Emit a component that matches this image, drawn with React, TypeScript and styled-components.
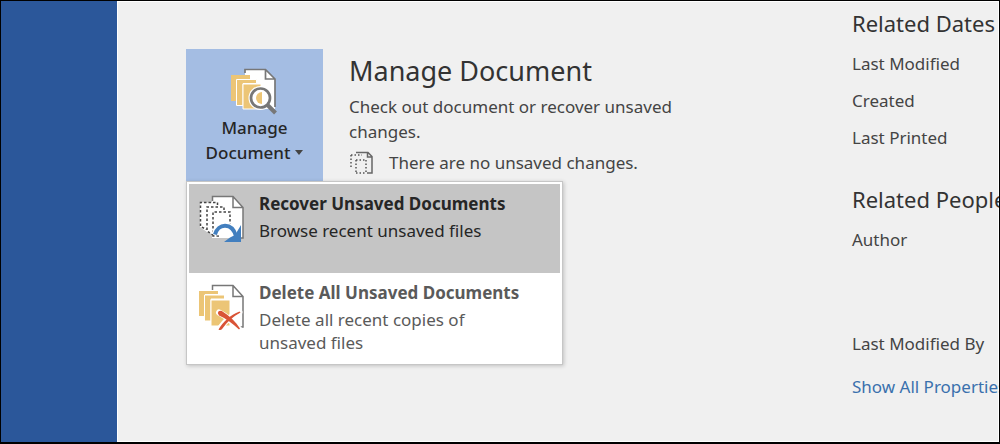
import React from 'react';
import styled, { createGlobalStyle } from 'styled-components';

const GlobalStyle = createGlobalStyle`
  * { box-sizing: border-box; }
  body {
    margin: 0;
    background: #f0f0f0;
    font-family: "Noto Sans", "Open Sans", sans-serif;
    font-size: 17px;
    color: #444;
  }
  h1, h2, p, ul, dl, dt { margin: 0; padding: 0; font-weight: 400; }
  button { font: inherit; color: inherit; border: 0; cursor: pointer; }
  svg { display: block; flex: none; }
`;

const Window = styled.div`
  display: flex;
  min-height: 100vh;
  border: 1px solid #000;
  border-bottom-width: 2px;
  overflow: hidden;
`;

const Sidebar = styled.nav`
  flex: 0 0 116px;
  background: #2b579a;
`;

const Page = styled.main`
  flex: 1;
  min-width: 0;
  display: flex;
  justify-content: space-between;
  border: 1px solid #fff;
`;

const Section = styled.section`
  display: flex;
  align-items: flex-start;
  gap: 26px;
  padding: 47px 0 0 68px;
`;

const MenuAnchor = styled.div`
  position: relative;
  flex: none;
`;

const Tile = styled.button`
  display: flex;
  flex-direction: column;
  align-items: center;
  width: 137px;
  height: 136px;
  padding: 18px 0 0;
  background: #a4bde3;
  color: #262626;
  font-weight: 500;
  line-height: 25px;
`;

const Caret = styled.span`
  display: inline-block;
  margin-left: 5px;
  vertical-align: 4px;
  border: 4px solid transparent;
  border-top: 5px solid #444;
  border-bottom: 0;
`;

const Menu = styled.ul`
  position: absolute;
  top: 132px;
  left: 0;
  width: 377px;
  padding: 2px;
  list-style: none;
  background: #fff;
  border: 1px solid #c6c6c6;
  box-shadow: 1px 1px 4px rgba(0, 0, 0, 0.2);
`;

const MenuItem = styled.button<{ $active?: boolean }>`
  display: flex;
  align-items: flex-start;
  gap: 12px;
  width: 100%;
  height: 89px;
  padding: 8px 0 0 10px;
  text-align: left;
  background: ${(p) => (p.$active ? '#c5c5c5' : '#fff')};
  color: ${(p) => (p.$active ? '#262626' : '#5a5a5a')};
`;

const ItemText = styled.span`
  display: flex;
  flex-direction: column;
  gap: 4px;
  line-height: 23px;
`;

const ItemTitle = styled.strong`
  font-weight: 700;
  white-space: nowrap;
`;

const ItemNote = styled.span`
  width: 240px;
`;

const Details = styled.div`
  width: 350px;
`;

const Title = styled.h1`
  margin: 4px 0 5px;
  font-size: 27px;
  line-height: 36px;
  color: #333;
`;

const Copy = styled.p`
  line-height: 25px;
`;

const Status = styled.p`
  display: flex;
  align-items: center;
  gap: 14px;
  margin-top: 6px;
  line-height: 25px;
`;

const Properties = styled.aside`
  flex: none;
  width: 146px;
  padding-top: 6px;
  white-space: nowrap;
`;

const Heading = styled.h2`
  margin-bottom: 7px;
  font-size: 22px;
  line-height: 30px;
  color: #333;
`;

const List = styled.dl`
  margin-bottom: 28px;
  line-height: 37px;
`;

const SpacedTerm = styled.dt`
  margin-top: 67px;
`;

const Link = styled.a`
  display: block;
  margin-top: -22px;
  line-height: 37px;
  color: #3a70ad;
  text-decoration: none;
`;

const SheetBehind = () => (
  <>
    <path d="M13 4.500h21l10 11V46H13z" fill="#fff" />
    <path d="M13.500 9V4.500h20.500L44 15.500V46h-3M34 4.500v11h10" fill="none" stroke="#777" strokeWidth="1.500" />
  </>
);

const ManageIcon = () => (
  <svg width="48" height="48" viewBox="0 0 48 48" aria-hidden="true">
    <path d="M14 2.500h20l10 10V42H14z" fill="#fff" />
    <path d="M14 6V2.500h20.500L44 12v28M34.500 2.500V12H44" fill="none" stroke="#777" strokeWidth="1.700" />
    <path d="M0 8h19v4H6v22H0z" fill="#ecc576" />
    <path d="M5.500 12.500h20v4H12v22H5.500z" fill="#ecc576" stroke="#fff" />
    <path d="M12 17h18v25H12z" fill="#ecc576" stroke="#fff" />
    <circle cx="29.500" cy="31" r="12" fill="#fff" />
    <path d="M31 25v12a6 6 0 0 1 0-12z" fill="#ecc576" />
    <circle cx="29.500" cy="31" r="9.500" fill="none" stroke="#777" strokeWidth="2.700" />
    <path d="M36.500 38l8 8" stroke="#777" strokeWidth="4" />
  </svg>
);

const RecoverIcon = () => (
  <svg width="48" height="52" viewBox="0 0 48 52" aria-hidden="true">
    <SheetBehind />
    <path d="M1 10.500h17V15h6.500v4.500H31V44H18l-10-4-7-5z" fill="#fff" />
    <g fill="none" stroke="#444" strokeWidth="1.500" strokeDasharray="2.500 2">
      <path d="M18.500 13v-2.500H1.500v24l6 3" />
      <path d="M25 18v-3H8v24l6 4" />
      <path d="M31 34V20H14v24h6" />
    </g>
    <path d="M16 42.500C19 31 33 30 37 44" fill="none" stroke="#fff" strokeWidth="7" />
    <path d="M16 42.500C19 31 33 30 37 44" fill="none" stroke="#427fbf" strokeWidth="4" />
    <path d="M42 33v17H25l6-4.500 5-2.500z" fill="#427fbf" />
  </svg>
);

const DeleteIcon = () => (
  <svg width="48" height="52" viewBox="0 0 48 52" aria-hidden="true">
    <SheetBehind />
    <path d="M0 10h19v3H6v22H0z" fill="#ecc576" />
    <path d="M5.500 14h20v4H12v22H5.500z" fill="#ecc576" stroke="#fff" />
    <path d="M12 19h19v26H12z" fill="#ecc576" stroke="#fff" />
    <path d="M20 31.500C29 36 34 41 40 48M40.500 31C33 34 26 40 20.500 48" fill="none" stroke="#fff" strokeWidth="6" strokeLinecap="round" />
    <path d="M18.800 32q.5-3 4-2C31 35 37 41 41 47.500l-1 1C33 42 27 37.500 20 34.500z" fill="#d95336" />
    <path d="M40.500 30.500l1 1C34 35.500 28 41 23.500 47.500q-2 2.500-4 1C24 41 31 34 40.500 30.500z" fill="#d95336" />
  </svg>
);

const DraftIcon = () => (
  <svg width="26" height="24" viewBox="0 0 26 24" aria-hidden="true">
    <path d="M7 1.500h12l4 4V22h-5M18.500 1.500V6H23" fill="none" stroke="#666" strokeWidth="1.500" />
    <path d="M2 4v14M2 4h11M7 9v13M7 9h10M17 9v13M7 22h10" fill="none" stroke="#555" strokeWidth="1.500" strokeDasharray="1.500 2" />
  </svg>
);

export default function App() {
  return (
    <>
      <GlobalStyle />
      <Window>
        <Sidebar />
        <Page>
          <Section>
            <MenuAnchor>
              <Tile type="button" aria-haspopup="menu" aria-expanded="true">
                <ManageIcon />
                <span>Manage</span>
                <span>
                  Document
                  <Caret />
                </span>
              </Tile>
              <Menu>
                <li>
                  <MenuItem type="button" $active>
                    <RecoverIcon />
                    <ItemText>
                      <ItemTitle>Recover Unsaved Documents</ItemTitle>
                      <ItemNote>Browse recent unsaved files</ItemNote>
                    </ItemText>
                  </MenuItem>
                </li>
                <li>
                  <MenuItem type="button">
                    <DeleteIcon />
                    <ItemText>
                      <ItemTitle>Delete All Unsaved Documents</ItemTitle>
                      <ItemNote>Delete all recent copies of unsaved files</ItemNote>
                    </ItemText>
                  </MenuItem>
                </li>
              </Menu>
            </MenuAnchor>
            <Details>
              <Title>Manage Document</Title>
              <Copy>Check out document or recover unsaved changes.</Copy>
              <Status>
                <DraftIcon />
                There are no unsaved changes.
              </Status>
            </Details>
          </Section>
          <Properties>
            <Heading>Related Dates</Heading>
            <List>
              <dt>Last Modified</dt>
              <dt>Created</dt>
              <dt>Last Printed</dt>
            </List>
            <Heading>Related People</Heading>
            <List>
              <dt>Author</dt>
              <SpacedTerm>Last Modified By</SpacedTerm>
            </List>
            <Link href="#properties">Show All Properties</Link>
          </Properties>
        </Page>
      </Window>
    </>
  );
}
